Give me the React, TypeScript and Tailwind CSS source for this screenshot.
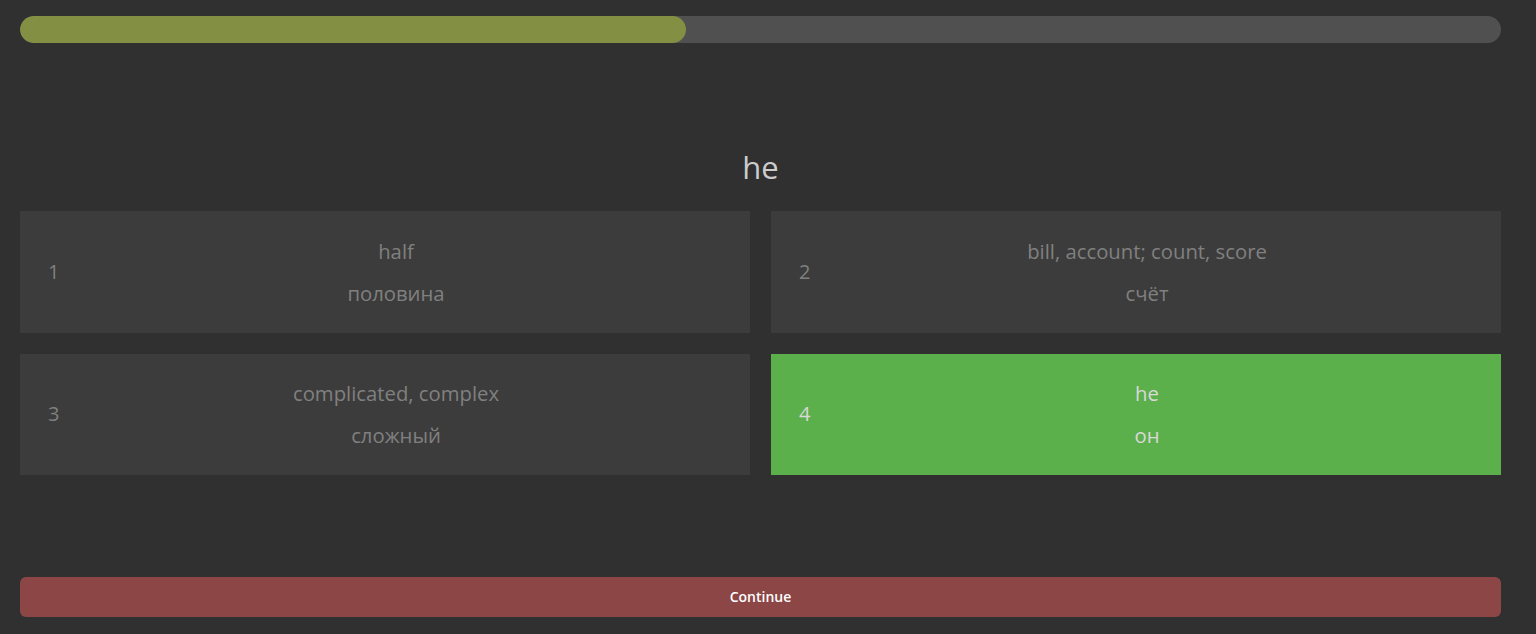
import React from 'react';

const OPTIONS = [
  { n: 1, en: 'half', ru: 'половина', correct: false },
  { n: 2, en: 'bill, account; count, score', ru: 'счёт', correct: false },
  { n: 3, en: 'complicated, complex', ru: 'сложный', correct: false },
  { n: 4, en: 'he', ru: 'он', correct: true },
];

export default function App() {
  const progress = 45;

  return (
    <div className="min-h-screen bg-[#303030] pl-5 pr-[35px] pt-4 pb-[17px] font-['Open_Sans',sans-serif]">
      <div className="h-[27px] w-full rounded-full bg-[#505050] overflow-hidden">
        <div className="h-full rounded-full bg-[#838f42]" style={{ width: `${progress}%` }} />
      </div>

      <h1 className="mt-[104px] mb-[24px] text-center text-[31px] leading-[40px] text-[#cccccc]">he</h1>

      <div className="grid grid-cols-2 gap-[21px]">
        {OPTIONS.map((o) => (
          <div
            key={o.n}
            className={
              o.correct
                ? 'flex h-[121.5px] items-center px-7 bg-[#5bb04c] text-[#d8d8d8]'
                : 'flex h-[121.5px] items-center px-7 bg-[#3c3c3c] text-[#808080]'
            }
          >
            <span className="w-[22px] text-[20px]">{o.n}</span>
            <div className="flex-1 text-center text-[20.3px] leading-[42px]">
              <div>{o.en}</div>
              <div>{o.ru}</div>
            </div>
          </div>
        ))}
      </div>

      <button className="mt-[102px] h-10 w-full rounded-md bg-[#8c4646] text-sm font-semibold text-white">
        Continue
      </button>
    </div>
  );
}
